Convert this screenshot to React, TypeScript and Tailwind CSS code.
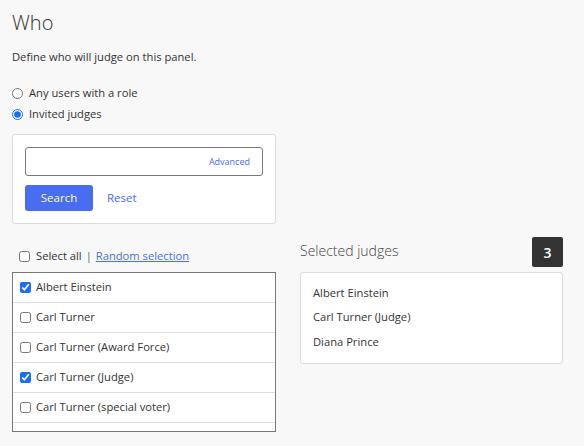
import React from "react";

const judges = [
  { name: "Albert Einstein", checked: true },
  { name: "Carl Turner", checked: false },
  { name: "Carl Turner (Award Force)", checked: false },
  { name: "Carl Turner (Judge)", checked: true },
  { name: "Carl Turner (special voter)", checked: false },
  { name: "Carl Turner (test)", checked: false },
  { name: "Diana Prince", checked: true },
];

const selected = ["Albert Einstein", "Carl Turner (Judge)", "Diana Prince"];

export default function App() {
  return (
    <div
      className="w-[584px] h-[446px] overflow-hidden bg-[#f8f8f8] text-[#333] pl-[12px] pt-[8px]"
      style={{ fontFamily: '"Open Sans", sans-serif' }}
    >
      {/* Title */}
      <h1 className="text-[20px] leading-[30px] font-light text-[#333]">Who</h1>
      <p className="mt-[10px] text-[11.2px] leading-[17px]">Define who will judge on this panel.</p>

      {/* Radios */}
      <div className="mt-[18px] flex flex-col">
        <label className="h-[21px] flex items-center gap-[6px] text-[11.2px]">
          <input type="radio" name="who" className="m-0 w-[11px] h-[11px] accent-[#1a6ff0]" />
          Any users with a role
        </label>
        <label className="h-[21px] flex items-center gap-[6px] text-[11.2px]">
          <input type="radio" name="who" defaultChecked className="m-0 w-[11px] h-[11px] accent-[#1a6ff0]" />
          Invited judges
        </label>
      </div>

      {/* Search panel */}
      <div className="mt-[9px] w-[264px] bg-white border border-[#dcdcdc] rounded-[3px] p-[12px]">
        <div className="h-[29px] border border-[#777] rounded-[3px] flex items-center justify-end pr-[12px]">
          <a className="text-[9px] text-[#4a6cf0]">Advanced</a>
        </div>
        <div className="mt-[9px] flex items-center gap-[14px]">
          <button className="w-[68px] h-[26px] rounded-[3px] bg-[#4a6cf0] text-white text-[11.5px]">Search</button>
          <a className="text-[11.5px] text-[#4a6cf0]">Reset</a>
        </div>
      </div>

      {/* Lists */}
      <div className="mt-[13px] flex gap-[24px]">
        <div className="w-[264px]">
          <div className="h-[35px] pt-[3px] pl-[7px] flex items-center text-[11.2px]">
            <input type="checkbox" className="m-0 mr-[6px] w-[11px] h-[11px] accent-[#1a6ff0]" />
            <span>Select all</span>
            <span className="text-[#666] mx-[4px]">|</span>
            <a className="text-[#4a6cf0] underline">Random selection</a>
          </div>
          <div className="h-[160px] overflow-hidden bg-white border border-[#777]">
            {judges.map((j) => (
              <label
                key={j.name}
                className="h-[30px] border-b border-[#ddd] flex items-center gap-[5px] pl-[7px] text-[11.2px]"
              >
                <input
                  type="checkbox"
                  defaultChecked={j.checked}
                  className="m-0 w-[11px] h-[11px] accent-[#1a6ff0]"
                />
                {j.name}
              </label>
            ))}
          </div>
        </div>

        <div className="w-[263px]">
          <div className="h-[30px] flex items-center justify-between">
            <h2 className="text-[14px] font-light text-[#444] -mt-[3px]">Selected judges</h2>
            <span className="w-[31px] h-[30px] rounded-[2px] bg-[#333] text-white text-[14px] font-semibold flex items-center justify-center">
              3
            </span>
          </div>
          <div className="mt-[5px] bg-white border border-[#dcdcdc] rounded-[3px] py-[8px] pl-[12px]">
            {selected.map((s) => (
              <div key={s} className="h-[24.5px] flex items-center text-[11.2px]">
                {s}
              </div>
            ))}
          </div>
        </div>
      </div>
    </div>
  );
}
